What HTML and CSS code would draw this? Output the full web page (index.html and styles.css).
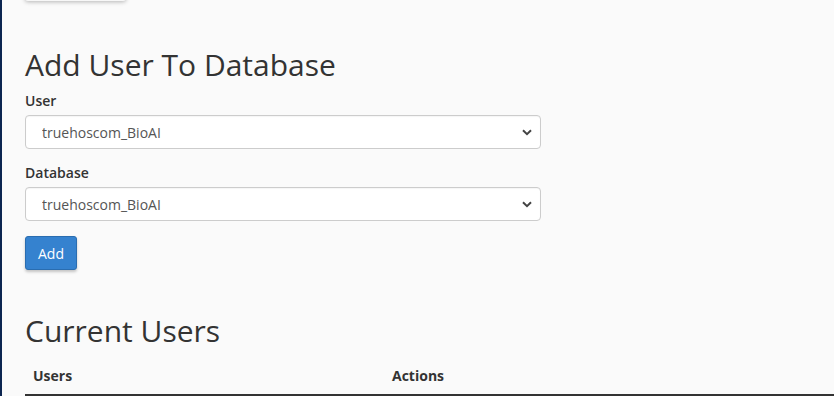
FILE: index.html
```html
<!DOCTYPE html>
<html lang="en">
<head>
<meta charset="utf-8">
<title>Add User To Database</title>
<link rel="stylesheet" href="styles.css">
</head>
<body>
<div class="frame">
  <div class="sidebar-edge"></div>
  <main class="content">
    <div class="prev-actions"><button class="btn-prev" type="button" aria-label="Go Back"></button></div>

    <h2 class="section-title first">Add User To Database</h2>
    <form class="add-form">
      <div class="form-group">
        <label class="field-label" for="user">User</label>
        <select class="field-select" id="user"><option>truehoscom_BioAI</option></select>
      </div>
      <div class="form-group">
        <label class="field-label" for="db">Database</label>
        <select class="field-select" id="db"><option>truehoscom_BioAI</option></select>
      </div>
      <button class="btn-primary" type="button">Add</button>
    </form>

    <h2 class="section-title">Current Users</h2>
    <table class="users-table">
      <thead>
        <tr><th class="col-users">Users</th><th>Actions</th></tr>
      </thead>
    </table>
  </main>
</div>
</body>
</html>
```
FILE: styles.css
```css
html, body {
  margin: 0;
  padding: 0;
  background: #fafafa;
  overflow: hidden;
  height: 396px;
}
body {
  font-family: "Open Sans", "Liberation Sans", sans-serif;
  font-size: 14px;
  line-height: 20px;
  color: #333;
}
.frame {
  display: flex;
  min-height: 396px;
}
.sidebar-edge {
  width: 2px;
  flex: 0 0 2px;
  background: #0c2550;
}
.content {
  flex: 1;
  padding-left: 23px;
  margin-right: -40px;
}
.prev-actions {
  margin-top: -33px;
  height: 34px;
}
.btn-prev {
  display: block;
  width: 101px;
  height: 34px;
  border: 0;
  border-radius: 3px;
  background: #f7f7f7;
  box-shadow: 0 1px 4px rgba(0, 0, 0, 0.28);
}
.section-title {
  margin: 47px 0 10px;
  font-size: 30px;
  line-height: 33px;
  font-weight: 400;
  color: #333;
}
.add-form {
  width: 516px;
}
.form-group {
  margin-bottom: 14px;
}
.field-label {
  display: block;
  font-weight: 600;
  margin-bottom: 4px;
  color: #333;
}
.field-select {
  display: block;
  width: 516px;
  height: 34px;
  padding: 0 30px 0 16px;
  border: 1px solid #ccc;
  border-radius: 4px;
  background: #fff url("data:image/svg+xml;utf8,<svg xmlns='http://www.w3.org/2000/svg' width='10' height='7' viewBox='0 0 10 7'><path d='M1 1.2 L5 5.2 L9 1.2' fill='none' stroke='%23444' stroke-width='2'/></svg>") no-repeat right 8px center;
  -webkit-appearance: none;
  appearance: none;
  font-family: inherit;
  font-size: 14px;
  color: #555;
  box-shadow: inset 0 1px 1px rgba(0, 0, 0, 0.04);
}
.btn-primary {
  display: block;
  margin-top: 15px;
  height: 34px;
  padding: 0 12px;
  border: 1px solid #2a6db0;
  border-radius: 3px;
  background: #3582cf;
  color: #fff;
  font-family: inherit;
  font-size: 14px;
  box-shadow: 0 2px 3px rgba(0, 0, 0, 0.22);
}
.add-form + .section-title {
  margin-top: 44px;
}
.users-table {
  width: 100%;
  border-collapse: collapse;
  margin-top: 11px;
}
.users-table th {
  text-align: left;
  padding: 8px;
  font-weight: 700;
  border-bottom: 2px solid #333;
  color: #333;
}
.users-table .col-users {
  width: 343px;
}
```
